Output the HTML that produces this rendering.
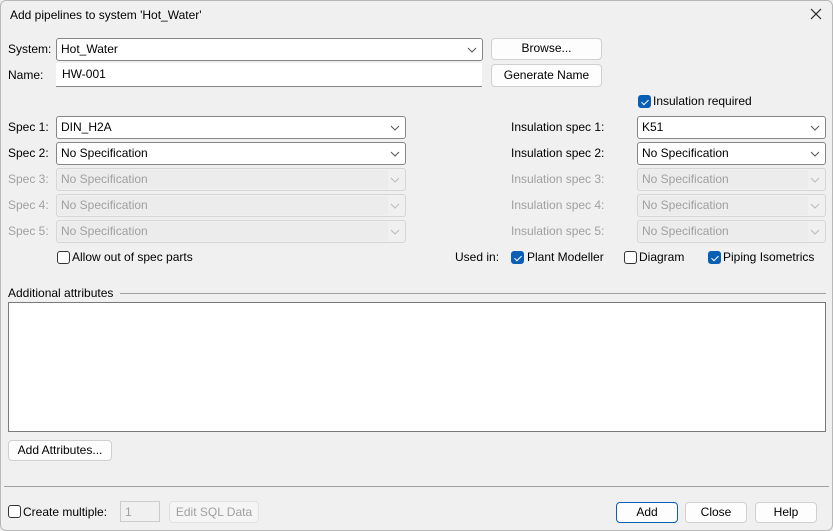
<!DOCTYPE html>
<html><head><style>
*{box-sizing:border-box;margin:0;padding:0}
body{width:833px;height:531px;background:#f0f0f0;font-family:"Liberation Sans",sans-serif;font-size:12px;color:#000;position:relative;overflow:hidden}
.a{position:absolute}
.t{position:absolute;line-height:14px;white-space:nowrap}
.dis{color:#a0a0a0}
.cb{position:absolute;height:23px;background:#fff;border:1px solid #868686;border-radius:3px;padding-left:4px;line-height:21px}
.cb.d{background:#f0f0f0;border-color:#d6d6d6;color:#a0a0a0}
.cb.d::before{content:"";position:absolute;right:17px;top:1px;bottom:1px;left:1px;background:#ececec;z-index:0}
.cb span{position:relative}
.arr{position:absolute;right:5px;top:8px;width:10px;height:6px}
.btn{position:absolute;background:#fdfdfd;border:1px solid #d0d0d0;border-radius:4px;text-align:center;line-height:19px}
.chk{position:absolute;width:13px;height:13px;border:1px solid #333;border-radius:3px;background:#fff}
.chk.on{background:#0a5fb4;border-color:#0a5fb4}
.chk.on::after{content:"";position:absolute;left:3.5px;top:1.5px;width:3px;height:6px;border-right:1.5px solid #fff;border-bottom:1.5px solid #fff;transform:rotate(45deg)}
</style></head><body>
<div class="a" style="left:0;top:0;width:833px;height:531px;border:1px solid #b8b8b8;border-radius:6px"></div>
<div class="t" style="left:10px;top:8px">Add pipelines to system 'Hot_Water'</div>
<svg class="a" style="left:810px;top:8px" width="12" height="12"><path d="M1 1L11 11M11 1L1 11" stroke="#222" stroke-width="1.2"/></svg>

<div class="t" style="left:8px;top:42px">System:</div>
<div class="cb" style="left:56px;top:38px;width:427px"><span>Hot_Water</span><svg class="arr"><path d="M1 1L5 5L9 1" fill="none" stroke="#555"/></svg></div>
<div class="btn" style="left:491px;top:38px;width:111px;height:22px">Browse...</div>
<div class="t" style="left:8px;top:68px">Name:</div>
<div class="a" style="left:56px;top:63px;width:426px;height:24px;background:#fff;border-bottom:1px solid #868686"></div>
<div class="t" style="left:62px;top:67px">HW-001</div>
<div class="btn" style="left:491px;top:64px;width:111px;height:23px;line-height:21px">Generate Name</div>

<div class="chk on" style="left:638px;top:95px"></div>
<div class="t" style="left:653px;top:94px">Insulation required</div>

<div class="t" style="left:8px;top:120px">Spec 1:</div>
<div class="cb" style="left:56px;top:116px;width:350px"><span>DIN_H2A</span><svg class="arr"><path d="M1 1L5 5L9 1" fill="none" stroke="#555"/></svg></div>
<div class="t" style="left:8px;top:146px">Spec 2:</div>
<div class="cb" style="left:56px;top:142px;width:350px"><span>No Specification</span><svg class="arr"><path d="M1 1L5 5L9 1" fill="none" stroke="#555"/></svg></div>
<div class="t dis" style="left:8px;top:172px">Spec 3:</div>
<div class="cb d" style="left:56px;top:168px;width:350px"><span>No Specification</span><svg class="arr"><path d="M1 1L5 5L9 1" fill="none" stroke="#bbb"/></svg></div>
<div class="t dis" style="left:8px;top:198px">Spec 4:</div>
<div class="cb d" style="left:56px;top:194px;width:350px"><span>No Specification</span><svg class="arr"><path d="M1 1L5 5L9 1" fill="none" stroke="#bbb"/></svg></div>
<div class="t dis" style="left:8px;top:224px">Spec 5:</div>
<div class="cb d" style="left:56px;top:220px;width:350px"><span>No Specification</span><svg class="arr"><path d="M1 1L5 5L9 1" fill="none" stroke="#bbb"/></svg></div>

<div class="t" style="left:511px;top:120px">Insulation spec 1:</div>
<div class="cb" style="left:637px;top:116px;width:189px"><span>K51</span><svg class="arr"><path d="M1 1L5 5L9 1" fill="none" stroke="#555"/></svg></div>
<div class="t" style="left:511px;top:146px">Insulation spec 2:</div>
<div class="cb" style="left:637px;top:142px;width:189px"><span>No Specification</span><svg class="arr"><path d="M1 1L5 5L9 1" fill="none" stroke="#555"/></svg></div>
<div class="t dis" style="left:511px;top:172px">Insulation spec 3:</div>
<div class="cb d" style="left:637px;top:168px;width:189px"><span>No Specification</span><svg class="arr"><path d="M1 1L5 5L9 1" fill="none" stroke="#bbb"/></svg></div>
<div class="t dis" style="left:511px;top:198px">Insulation spec 4:</div>
<div class="cb d" style="left:637px;top:194px;width:189px"><span>No Specification</span><svg class="arr"><path d="M1 1L5 5L9 1" fill="none" stroke="#bbb"/></svg></div>
<div class="t dis" style="left:511px;top:224px">Insulation spec 5:</div>
<div class="cb d" style="left:637px;top:220px;width:189px"><span>No Specification</span><svg class="arr"><path d="M1 1L5 5L9 1" fill="none" stroke="#bbb"/></svg></div>

<div class="chk" style="left:57px;top:251px"></div>
<div class="t" style="left:72px;top:250px">Allow out of spec parts</div>
<div class="t" style="left:455px;top:250px">Used in:</div>
<div class="chk on" style="left:511px;top:251px"></div>
<div class="t" style="left:527px;top:250px">Plant Modeller</div>
<div class="chk" style="left:624px;top:251px"></div>
<div class="t" style="left:639px;top:250px">Diagram</div>
<div class="chk on" style="left:708px;top:251px"></div>
<div class="t" style="left:723px;top:250px">Piping Isometrics</div>

<div class="t" style="left:8px;top:286px">Additional attributes</div>
<div class="a" style="left:120px;top:293px;width:706px;height:1px;background:#a0a0a0"></div>
<div class="a" style="left:8px;top:302px;width:818px;height:130px;background:#fff;border:1px solid #7a7a7a"></div>
<div class="btn" style="left:8px;top:440px;width:104px;height:21px">Add Attributes...</div>

<div class="a" style="left:4px;top:486px;width:825px;height:1px;background:#a0a0a0"></div>
<div class="chk" style="left:8px;top:505px"></div>
<div class="t" style="left:23px;top:505px">Create multiple:</div>
<div class="a" style="left:120px;top:501px;width:40px;height:21px;border:1px solid #ccc;background:#f0f0f0"></div>
<div class="t dis" style="left:125px;top:505px">1</div>
<div class="btn dis" style="left:169px;top:501px;width:90px;height:22px;background:#f5f5f5;border-color:#e0e0e0;line-height:20px">Edit SQL Data</div>
<div class="btn" style="left:616px;top:502px;width:62px;height:21px;border-color:#0a5fb4">Add</div>
<div class="btn" style="left:685px;top:502px;width:62px;height:21px">Close</div>
<div class="btn" style="left:755px;top:502px;width:62px;height:21px">Help</div>
</body></html>
